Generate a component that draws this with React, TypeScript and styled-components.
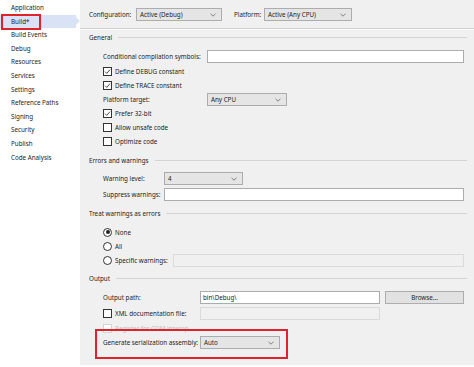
import * as React from 'react';
import styled, { createGlobalStyle } from 'styled-components';

const GlobalStyle = createGlobalStyle`
  html, body {
    margin: 0;
    padding: 0;
    background: #ffffff;
  }
  body {
    font-family: "Noto Sans", "Liberation Sans", sans-serif;
    font-size: 6.25px;
    color: #222222;
  }
`;

const Window = styled.div`
  display: flex;
  width: 474px;
  height: 367px;
  overflow: hidden;
  background: #ffffff;
`;

const Sidebar = styled.ul`
  list-style: none;
  margin: 0;
  padding: 1px 0 0 0;
  width: 80px;
  flex: none;
`;

const NavItem = styled.li<{ $active?: boolean }>`
  position: relative;
  height: 13.6px;
  line-height: 13.6px;
  padding-left: 11px;
  margin-right: 4px;
  white-space: nowrap;
  background: ${(p) => (p.$active ? '#d9e3f5' : 'transparent')};

  &::after {
    content: '';
    display: ${(p) => (p.$active ? 'block' : 'none')};
    position: absolute;
    right: -4px;
    top: 2.8px;
    border-left: 4px solid #d9e3f5;
    border-top: 4px solid transparent;
    border-bottom: 4px solid transparent;
  }
`;

const Callout = styled.span<{ $l: number; $t: number; $w: number; $h: number }>`
  position: absolute;
  left: ${(p) => p.$l}px;
  top: ${(p) => p.$t}px;
  width: ${(p) => p.$w}px;
  height: ${(p) => p.$h}px;
  border: 2px solid #e0232a;
  box-sizing: border-box;
  pointer-events: none;
`;

const Main = styled.div`
  flex: 1;
  height: 365px;
  background: #f0f0f0;
  display: flex;
  flex-direction: column;
`;

const TopBar = styled.div`
  display: flex;
  align-items: center;
  height: 28px;
  padding-left: 9px;
  border-bottom: 1px solid #d2d2d2;
  box-shadow: 0 1px 0 #fbfbfb;
  flex: none;
`;

const TopLabel = styled.span<{ $w: number }>`
  width: ${(p) => p.$w}px;
  flex: none;
`;

const Select = styled.div<{ $w: number }>`
  position: relative;
  box-sizing: border-box;
  width: ${(p) => p.$w}px;
  height: 13px;
  line-height: 11px;
  padding-left: 3px;
  background: #e5e5e5;
  border: 1px solid #acacac;
  flex: none;

  svg {
    position: absolute;
    right: 5px;
    top: 4px;
  }
`;

const Gap = styled.span<{ $w: number }>`
  width: ${(p) => p.$w}px;
  flex: none;
`;

const SectionHeader = styled.div<{ $mt: number }>`
  display: flex;
  align-items: center;
  gap: 6px;
  height: 12px;
  margin-top: ${(p) => p.$mt}px;
  padding-left: 9px;
  padding-right: 7px;
  flex: none;

  &::after {
    content: '';
    flex: 1;
    height: 1px;
    background: #d3d3d3;
  }
`;

const Row = styled.div<{ $mt?: number; $h?: number }>`
  position: relative;
  display: flex;
  align-items: center;
  height: ${(p) => p.$h ?? 14}px;
  margin-top: ${(p) => p.$mt ?? 0}px;
  padding-left: 23px;
  padding-right: 10px;
  flex: none;
  white-space: nowrap;
`;

const Label = styled.span<{ $w?: number; $muted?: boolean }>`
  width: ${(p) => (p.$w ? `${p.$w}px` : 'auto')};
  flex: none;
  color: ${(p) => (p.$muted ? '#bdbdbd' : 'inherit')};
`;

const TextBox = styled.div<{ $w?: number; $disabled?: boolean }>`
  box-sizing: border-box;
  height: 13px;
  line-height: 11px;
  padding-left: 2px;
  ${(p) => (p.$w ? `width: ${p.$w}px; flex: none;` : 'flex: 1;')}
  background: ${(p) => (p.$disabled ? '#f0f0f0' : '#ffffff')};
  border: 1px solid ${(p) => (p.$disabled ? '#dadada' : '#acacac')};
`;

const Button = styled.div<{ $w: number }>`
  box-sizing: border-box;
  width: ${(p) => p.$w}px;
  height: 13px;
  line-height: 11px;
  text-align: center;
  background: #e1e1e1;
  border: 1px solid #adadad;
  margin-left: 5px;
  flex: none;
`;

const Box = styled.span<{ $disabled?: boolean }>`
  box-sizing: border-box;
  width: 9px;
  height: 9px;
  margin-right: 3px;
  background: #ffffff;
  border: 1px solid ${(p) => (p.$disabled ? '#d4d4d4' : '#333333')};
  display: inline-flex;
  align-items: center;
  justify-content: center;
  flex: none;
`;

const Radio = styled.span<{ $on?: boolean }>`
  box-sizing: border-box;
  width: 9px;
  height: 9px;
  margin-right: 3px;
  border-radius: 50%;
  background: #ffffff;
  border: 1px solid #333333;
  display: inline-flex;
  align-items: center;
  justify-content: center;
  flex: none;

  &::after {
    content: '';
    display: ${(p) => (p.$on ? 'block' : 'none')};
    width: 4px;
    height: 4px;
    border-radius: 50%;
    background: #222222;
  }
`;

const Chevron = () => (
  <svg width="6" height="4" viewBox="0 0 6 4">
    <path d="M0.5 0.8 L3 3.2 L5.5 0.8" fill="none" stroke="#666" strokeWidth="0.8" />
  </svg>
);

const Check = ({ on, disabled, children }: { on?: boolean; disabled?: boolean; children: React.ReactNode }) => (
  <>
    <Box $disabled={disabled}>
      {on && (
        <svg width="7" height="7" viewBox="0 0 7 7">
          <path d="M1 3.6 L2.8 5.4 L6 1.6" fill="none" stroke="#222" strokeWidth="0.8" />
        </svg>
      )}
    </Box>
    <Label $muted={disabled}>{children}</Label>
  </>
);

const navItems = [
  'Application',
  'Build*',
  'Build Events',
  'Debug',
  'Resources',
  'Services',
  'Settings',
  'Reference Paths',
  'Signing',
  'Security',
  'Publish',
  'Code Analysis',
];

export default function App() {
  return (
    <Window>
      <GlobalStyle />
      <Sidebar>
        {navItems.map((n) => (
          <NavItem key={n} $active={n === 'Build*'}>
            {n}
            {n === 'Build*' && <Callout $l={1} $t={-1} $w={40} $h={16} />}
          </NavItem>
        ))}
      </Sidebar>
      <Main>
        <TopBar>
          <TopLabel $w={47}>Configuration:</TopLabel>
          <Select $w={86}>
            Active (Debug)
            <Chevron />
          </Select>
          <Gap $w={12} />
          <TopLabel $w={30}>Platform:</TopLabel>
          <Select $w={88}>
            Active (Any CPU)
            <Chevron />
          </Select>
        </TopBar>

        <SectionHeader $mt={2}>General</SectionHeader>
        <Row $mt={7} $h={13}>
          <Label $w={104}>Conditional compilation symbols:</Label>
          <TextBox />
        </Row>
        <Row $mt={1}>
          <Check on>Define DEBUG constant</Check>
        </Row>
        <Row>
          <Check on>Define TRACE constant</Check>
        </Row>
        <Row>
          <Label $w={104}>Platform target:</Label>
          <Select $w={80}>
            Any CPU
            <Chevron />
          </Select>
        </Row>
        <Row>
          <Check on>Prefer 32-bit</Check>
        </Row>
        <Row>
          <Check>Allow unsafe code</Check>
        </Row>
        <Row>
          <Check>Optimize code</Check>
        </Row>

        <SectionHeader $mt={6}>Errors and warnings</SectionHeader>
        <Row $mt={6} $h={13}>
          <Label $w={61}>Warning level:</Label>
          <Select $w={79}>
            4
            <Chevron />
          </Select>
        </Row>
        <Row $mt={3} $h={13}>
          <Label $w={61}>Suppress warnings:</Label>
          <TextBox />
        </Row>

        <SectionHeader $mt={6}>Treat warnings as errors</SectionHeader>
        <Row $mt={6}>
          <Radio $on />
          None
        </Row>
        <Row>
          <Radio />
          All
        </Row>
        <Row>
          <Radio />
          <Label $w={58}>Specific warnings:</Label>
          <TextBox $disabled />
        </Row>

        <SectionHeader $mt={5}>Output</SectionHeader>
        <Row $mt={7} $h={13}>
          <Label $w={97}>Output path:</Label>
          <TextBox $w={180}>bin\Debug\</TextBox>
          <Button $w={79}>Browse...</Button>
        </Row>
        <Row $mt={3} $h={13}>
          <Box />
          <Label $w={85}>XML documentation file:</Label>
          <TextBox $w={180} $disabled />
        </Row>
        <Row $mt={1}>
          <Check disabled>Register for COM interop</Check>
        </Row>
        <Row $mt={1} $h={13}>
          <Label $w={97}>Generate serialization assembly:</Label>
          <Select $w={80}>
            Auto
            <Chevron />
          </Select>
          <Callout $l={15} $t={-7} $w={193} $h={30} />
        </Row>
      </Main>
    </Window>
  );
}
